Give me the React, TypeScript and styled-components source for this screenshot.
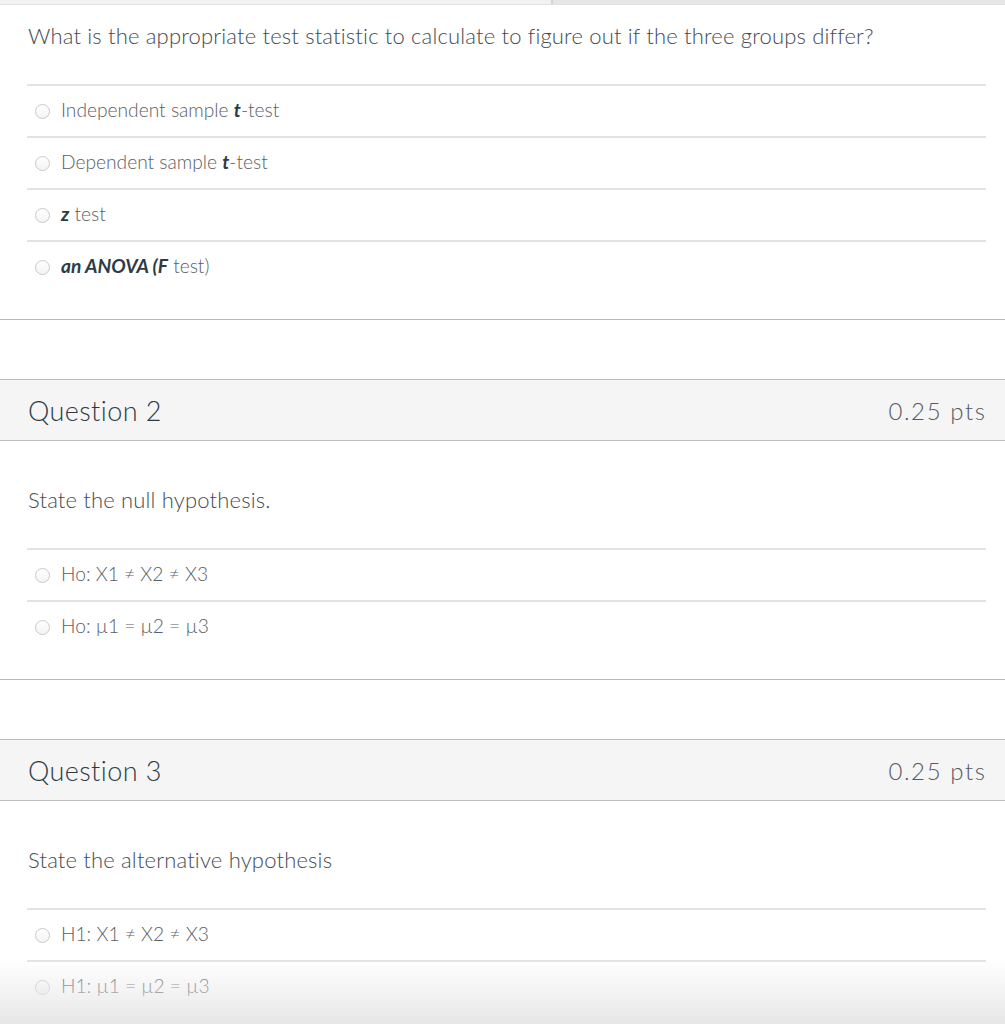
import React from 'react';
import styled, { createGlobalStyle } from 'styled-components';

const GlobalStyle = createGlobalStyle`
  html, body {
    margin: 0;
    padding: 0;
    background: #fff;
    font-family: Lato, "Open Sans", sans-serif;
  }

  body::after {
    content: '';
    position: fixed;
    left: 0;
    right: 0;
    bottom: 0;
    height: 66px;
    pointer-events: none;
    background: linear-gradient(to bottom, rgba(232, 232, 232, 0) 0%, rgba(232, 232, 232, 0.55) 55%, #e6e6e6 100%);
  }
`;

type Question = {
  number?: number;
  points?: string;
  text: string;
  answers: React.ReactNode[];
};

const getQuestions = (): Question[] => [
  {
    text: 'What is the appropriate test statistic to calculate to figure out if the three groups differ?',
    answers: [
      <>Independent sample <Strong>t</Strong>-test</>,
      <>Dependent sample <Strong>t</Strong>-test</>,
      <><Strong>z</Strong> test</>,
      <><Strong>an ANOVA (F</Strong> test)</>,
    ],
  },
  {
    number: 2,
    points: '0.25 pts',
    text: 'State the null hypothesis.',
    answers: ['Ho: X1 ≠ X2 ≠ X3', 'Ho: µ1 = µ2 = µ3'],
  },
  {
    number: 3,
    points: '0.25 pts',
    text: 'State the alternative hypothesis',
    answers: ['H1: X1 ≠ X2 ≠ X3', 'H1: µ1 = µ2 = µ3'],
  },
];

const App = () => {
  const questions = getQuestions();

  return (
    <Page>
      <GlobalStyle />
      <TopStrip>
        <StripLeft />
        <StripRight />
      </TopStrip>
      {questions.map((q, i) => (
        <QuestionBlock key={i} $first={i === 0}>
          {q.number && (
            <Header>
              <HeaderTitle>Question {q.number}</HeaderTitle>
              <Points>{q.points}</Points>
            </Header>
          )}
          <Body $first={i === 0}>
            <QuestionText $first={i === 0}>{q.text}</QuestionText>
            <AnswerList>
              {q.answers.map((a, j) => (
                <AnswerRow key={j}>
                  <Radio />
                  <AnswerLabel>{a}</AnswerLabel>
                </AnswerRow>
              ))}
            </AnswerList>
          </Body>
        </QuestionBlock>
      ))}
    </Page>
  );
};

export default App;

const Page = styled.div`
  width: 1005px;
  min-height: 1024px;
`;

const TopStrip = styled.div`
  display: flex;
  height: 4px;
  border-bottom: 1px solid #e2e2e2;
`;

const StripLeft = styled.div`
  width: 551px;
  background: #f3f2f1;
  border-right: 2px solid #d4d4d4;
`;

const StripRight = styled.div`
  flex: 1;
  background: #e6e6e6;
`;

const QuestionBlock = styled.section<{ $first: boolean }>`
  margin-top: ${({ $first }) => ($first ? '0' : '59px')};
`;

const Header = styled.div`
  display: flex;
  justify-content: space-between;
  align-items: center;
  height: 60px;
  padding: 0 20px 0 28px;
  background: #f5f5f5;
  border-top: 1px solid #bdbdbd;
  border-bottom: 1px solid #bdbdbd;
  color: #2d3b45;
`;

const HeaderTitle = styled.h2`
  margin: 0;
  font-size: 27px;
  font-weight: 300;
  letter-spacing: 0.4px;
  color: #2d3b45;
`;

const Points = styled.span`
  font-size: 24px;
  font-weight: 300;
  letter-spacing: 1.6px;
  margin-right: -1.6px;
  color: #555a5e;
`;

const Body = styled.div<{ $first: boolean }>`
  padding: ${({ $first }) => ($first ? '17px' : '45px')} 19px 27px 27px;
  border-bottom: 1px solid #b9b9b9;
`;

const QuestionText = styled.p<{ $first: boolean }>`
  margin: 0 0 34px 1px;
  font-size: 22px;
  line-height: 28px;
  font-weight: 300;
  letter-spacing: 0.17px;
  color: #444c52;
`;

const AnswerList = styled.ul`
  list-style: none;
  margin: 0;
  padding: 0;
`;

const AnswerRow = styled.li`
  display: flex;
  align-items: center;
  height: 50px;
  border-top: 2px solid #e3e3e3;
  padding-left: 8px;
`;

const Radio = styled.span`
  box-sizing: border-box;
  width: 15px;
  height: 15px;
  border-radius: 50%;
  border: 1px solid #c9c9c9;
  background: linear-gradient(to bottom, #ffffff, #f3f3f3);
  margin-right: 11px;
  flex-shrink: 0;
`;

const AnswerLabel = styled.span`
  font-size: 19.2px;
  font-weight: 300;
  color: #5a6066;
  margin-top: -3px;
`;

const Strong = styled.em`
  font-weight: 700;
  font-style: italic;
  color: #2d3b45;
`;
